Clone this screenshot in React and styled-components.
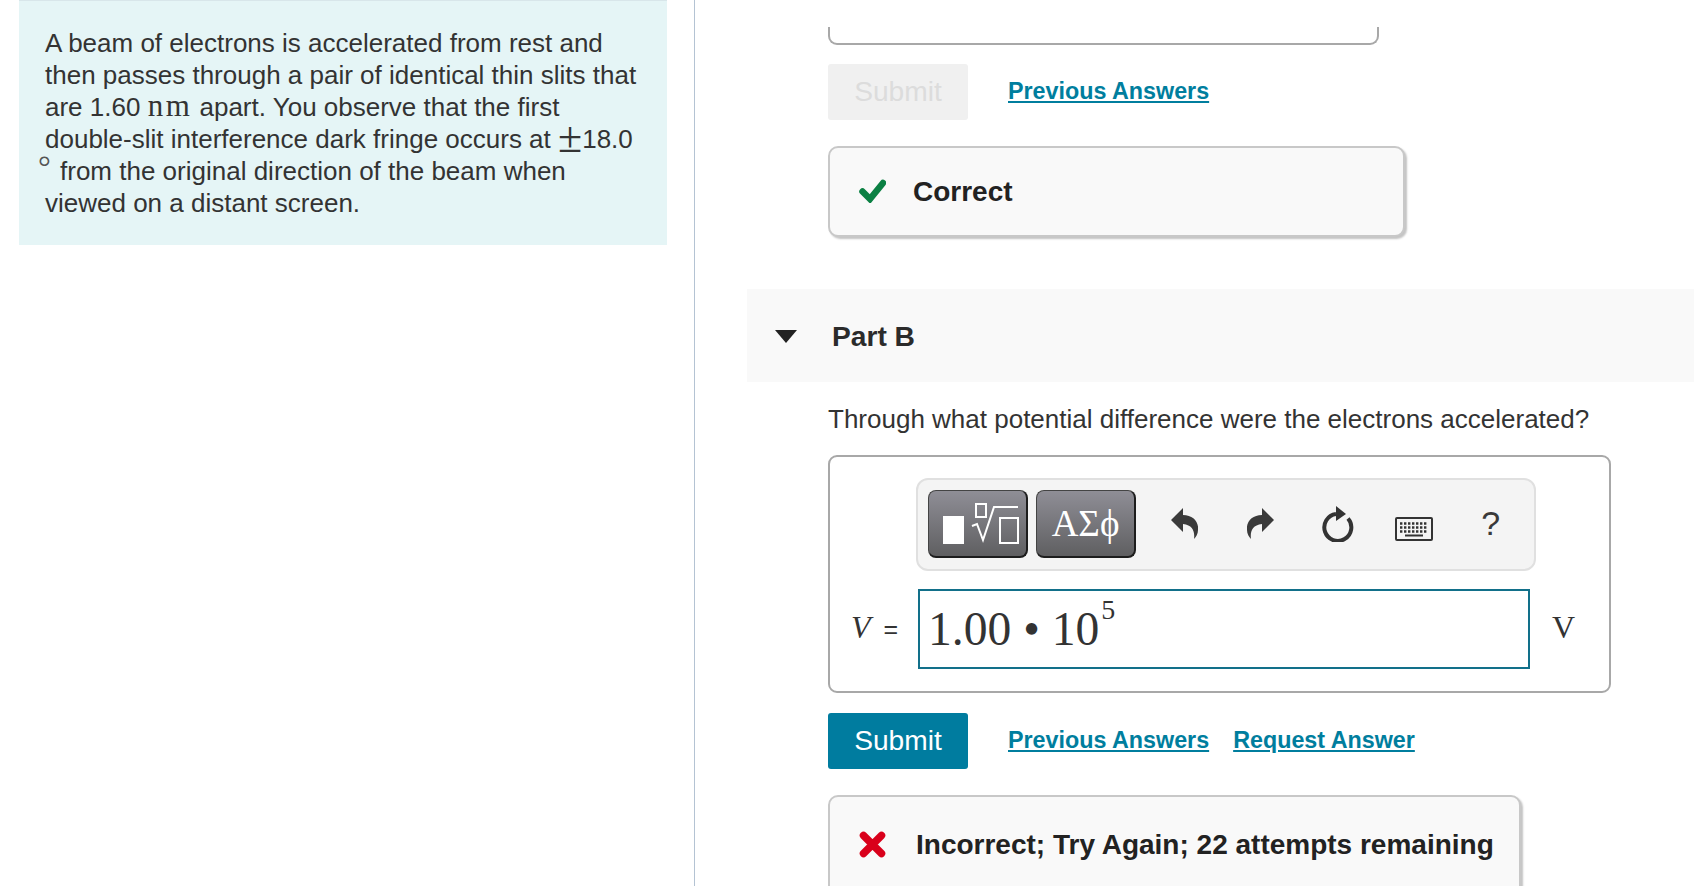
import React from "react";
import styled, { createGlobalStyle } from "styled-components";

const GlobalStyle = createGlobalStyle`
  * { box-sizing: border-box; }
  html, body { margin: 0; padding: 0; height: 886px; overflow: hidden; background: #fff; }
  body { font-family: "Liberation Sans", Arial, sans-serif; color: #333; }
`;

const Page = styled.div`
  display: flex;
  width: 1694px;
  height: 886px;
  overflow: hidden;
`;

const LeftPane = styled.div`
  width: 695px;
  flex: none;
  padding-left: 19px;
  border-right: 1px solid #b4c3d3;
`;

const Intro = styled.div`
  width: 648px;
  height: 245px;
  padding: 26px 26px 0;
  background: #e5f5f6;
  border-top: 1px solid #d8e6ea;
  font-size: 26px;
  line-height: 32px;
  color: #333;
`;

const Serif = styled.span`
  font-family: "Liberation Serif", serif;
  font-size: ${(p) => p.$size || 27}px;
  letter-spacing: ${(p) => p.$spacing || 0}px;
  vertical-align: ${(p) => p.$drop || 0}px;
  line-height: 0;
`;

const Degree = styled.span`
  display: inline-block;
  width: 22px;
  margin-left: -7px;
  font-family: "Liberation Serif", serif;
  font-size: 32px;
  line-height: 0;
  vertical-align: 2px;
  color: #555;
`;

const RightPane = styled.div`
  flex: 1;
  padding-top: 27px;
  min-width: 0;
`;

const Inner = styled.div`
  padding-left: 133px;
`;

const ClippedBox = styled.div`
  width: 551px;
  height: 18px;
  border: 2px solid #a8a8a8;
  border-top: none;
  border-radius: 0 0 9px 9px;
`;

const ActionRow = styled.div`
  display: flex;
  align-items: center;
  margin-top: ${(p) => p.$top}px;
`;

const SubmitButton = styled.button`
  width: 140px;
  height: 56px;
  border: none;
  border-radius: 3px;
  padding: 0;
  font-family: inherit;
  font-size: 28.16px;
  background: ${(p) => (p.disabled ? "#f0f0f0" : "#007c9f")};
  color: ${(p) => (p.disabled ? "#dcdcdc" : "#fff")};
  margin-right: 40px;
`;

const ActionLink = styled.a`
  font-size: 23.3px;
  font-weight: bold;
  color: #007e9e;
  text-decoration: underline;
  margin: 0 24px 2px 0;
`;

const Feedback = styled.div`
  display: flex;
  align-items: center;
  width: ${(p) => p.$width}px;
  height: ${(p) => p.$height}px;
  margin-top: ${(p) => p.$top}px;
  padding-left: 29px;
  background: #f9f9f9;
  border: 2px solid #c8c8c8;
  border-radius: 10px;
  box-shadow: 2px 2px 2px #c4c4c4;
  font-size: 28px;
  font-weight: bold;
  color: #222;
`;

const FeedbackIcon = styled.span`
  display: flex;
  width: ${(p) => p.$gap}px;
  flex: none;
  padding-bottom: 2px;
`;

const PartBar = styled.div`
  display: flex;
  align-items: center;
  height: 93px;
  margin: 52px 0 0 52px;
  padding: 2px 0 0 28px;
  background: #f9f9f9;
  font-size: 28.16px;
  font-weight: bold;
  color: #2b2b2b;
`;

const Caret = styled.span`
  width: 0;
  height: 0;
  margin-right: 35px;
  border-left: 11px solid transparent;
  border-right: 11px solid transparent;
  border-top: 13px solid #222;
`;

const Question = styled.p`
  margin: 21px 0 0;
  font-size: 26px;
  line-height: 32px;
  color: #333;
`;

const AnswerBox = styled.div`
  width: 783px;
  height: 238px;
  margin-top: 20px;
  padding: 21px 0 0 21px;
  border: 2px solid #a8a8a8;
  border-radius: 9px;
`;

const Toolbar = styled.div`
  display: flex;
  align-items: center;
  width: 620px;
  height: 93px;
  margin-left: 65px;
  padding: 0 0 2px 10px;
  background: #f4f4f4;
  border: 2px solid #e0e0e0;
  border-radius: 12px;
`;

const TemplateButton = styled.div`
  display: flex;
  flex: none;
  align-items: center;
  justify-content: center;
  width: 100px;
  height: 68px;
  margin-right: 8px;
  background: linear-gradient(#8f8e96, #5f5f61);
  border: 1px solid #444;
  border-bottom: 2px solid #1d1d1d;
  border-right: 2px solid #1d1d1d;
  border-radius: 8px;
  color: #fff;
  font-family: "Liberation Serif", serif;
  font-size: 37px;
`;

const ToolSlot = styled.span`
  display: flex;
  flex: none;
  justify-content: center;
  align-items: center;
  width: 76.6px;
  padding-top: ${(p) => p.$drop || 0}px;
  color: #3a3a3a;
  font-size: 34px;
`;

const ToolGroup = styled.div`
  display: flex;
  flex: none;
  align-items: center;
  margin-left: 2px;
`;

const EntryRow = styled.div`
  display: flex;
  align-items: center;
  margin-top: 18px;
`;

const VarLabel = styled.span`
  display: flex;
  align-items: baseline;
  width: 67px;
  flex: none;
  padding-bottom: 4px;
  font-size: 25px;
  color: #333;
  i { font-family: "Liberation Serif", serif; font-size: 32px; margin-right: 13px; }
`;

const MathInput = styled.div`
  display: flex;
  align-items: center;
  width: 612px;
  height: 80px;
  padding-left: 8px;
  border: 2px solid #12708a;
  font-family: "Liberation Serif", serif;
  font-size: 47.6px;
  white-space: pre;
  color: #333;
  sup { font-size: 28px; line-height: 0; position: relative; top: -19px; margin-left: 2px; }
`;

const Unit = styled.span`
  margin-left: 22px;
  padding-bottom: 4px;
  font-family: "Liberation Serif", serif;
  font-size: 32px;
  color: #333;
`;

const TemplateIcon = () => (
  <svg width="97" height="65" viewBox="0 0 97 65" fill="none" stroke="#fff" strokeWidth="2">
    <rect x="14" y="25" width="21" height="28" fill="#fff" stroke="none" />
    <rect x="47" y="13" width="10" height="13" />
    <path d="M43 35l5-2 6 16 11-33h24" />
    <rect x="71" y="27" width="18" height="25" />
  </svg>
);

const UndoIcon = ({ flip }) => (
  <svg width="27" height="31" viewBox="0 0 27 31" style={flip ? { transform: "scaleX(-1)" } : undefined}>
    <path
      d="M0 12L12 0v7c10 0 16 7 15 15 0 4-2 7-4 9 1-7-1-14-11-15v8z"
      fill="#3a3a3a"
    />
  </svg>
);

const ResetIcon = () => (
  <svg width="33" height="36" viewBox="0 0 33 36">
    <path d="M27 12.5A13.5 13.5 0 1 1 15 8" fill="none" stroke="#333" strokeWidth="4" />
    <path d="M15 0l10 8-10 7z" fill="#333" />
  </svg>
);

const KeyboardIcon = () => (
  <svg width="38" height="24" viewBox="0 0 38 24">
    <rect x="1" y="1" width="36" height="22" rx="1" fill="#f4f4f4" stroke="#333" strokeWidth="2" />
    <path d="M5 6.5h28M5 10.5h28M5 14.5h28" stroke="#333" strokeWidth="2.4" strokeDasharray="2.4 1.6" />
    <path d="M10 18.5h18" stroke="#333" strokeWidth="2" />
  </svg>
);

const CheckIcon = () => (
  <svg width="27" height="24" viewBox="0 0 27 24">
    <path d="M3.5 12.5l7.5 7.5L24 4" fill="none" stroke="#0b8043" strokeWidth="6.5" strokeLinejoin="miter" strokeLinecap="round" />
  </svg>
);

const CrossIcon = () => (
  <svg width="27" height="27" viewBox="0 0 27 27">
    <path d="M4.5 4.5l18 18M22.5 4.5l-18 18" fill="none" stroke="#d9001b" strokeWidth="7.5" strokeLinecap="round" />
  </svg>
);

export default function App() {
  return (
    <>
      <GlobalStyle />
      <Page>
        <LeftPane>
          <Intro>
            A beam of electrons is accelerated from rest and
            <br />
            then passes through a pair of identical thin slits that
            <br />
            are 1.60 <Serif $size={31} $spacing={2.5}>nm</Serif> apart. You observe that the first
            <br />
            double-slit interference dark fringe occurs at <Serif $size={44} $drop={-4}>±</Serif>18.0
            <br />
            <Degree>°</Degree>from the original direction of the beam when
            <br />
            viewed on a distant screen.
          </Intro>
        </LeftPane>
        <RightPane>
          <Inner>
            <ClippedBox />
            <ActionRow $top={19}>
              <SubmitButton disabled>Submit</SubmitButton>
              <ActionLink>Previous Answers</ActionLink>
            </ActionRow>
            <Feedback $width={577} $height={91} $top={26}>
              <FeedbackIcon $gap={54}><CheckIcon /></FeedbackIcon>
              Correct
            </Feedback>
          </Inner>
          <PartBar>
            <Caret />
            Part B
          </PartBar>
          <Inner>
            <Question>Through what potential difference were the electrons accelerated?</Question>
            <AnswerBox>
              <Toolbar>
                <TemplateButton><TemplateIcon /></TemplateButton>
                <TemplateButton>ΑΣϕ</TemplateButton>
                <ToolGroup>
                  <ToolSlot><UndoIcon /></ToolSlot>
                  <ToolSlot><UndoIcon flip /></ToolSlot>
                  <ToolSlot><ResetIcon /></ToolSlot>
                  <ToolSlot $drop={11}><KeyboardIcon /></ToolSlot>
                  <ToolSlot>?</ToolSlot>
                </ToolGroup>
              </Toolbar>
              <EntryRow>
                <VarLabel><i>V</i>=</VarLabel>
                <MathInput>1.00 • 10<sup>5</sup></MathInput>
                <Unit>V</Unit>
              </EntryRow>
            </AnswerBox>
            <ActionRow $top={20}>
              <SubmitButton>Submit</SubmitButton>
              <ActionLink>Previous Answers</ActionLink>
              <ActionLink>Request Answer</ActionLink>
            </ActionRow>
            <Feedback $width={693} $height={100} $top={26}>
              <FeedbackIcon $gap={57}><CrossIcon /></FeedbackIcon>
              Incorrect; Try Again; 22 attempts remaining
            </Feedback>
          </Inner>
        </RightPane>
      </Page>
    </>
  );
}
